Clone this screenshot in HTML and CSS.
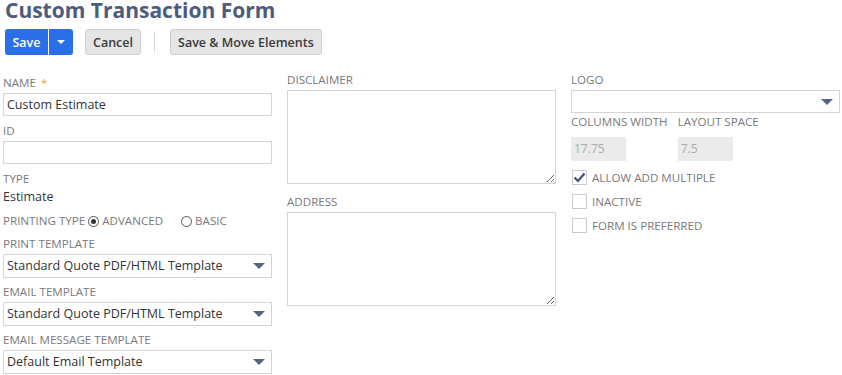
FILE: index.html
```html
<!DOCTYPE html>
<html lang="en">
<head>
<meta charset="UTF-8">
<title>Custom Transaction Form</title>
<link rel="stylesheet" href="styles.css">
</head>
<body>

<!-- Kopfbereich -->
<div class="header">
    <h1>Custom Transaction Form</h1>
    <div class="toolbar">
        <div class="saveGroup">
            <button class="saveButton">Save</button>
            <button class="saveArrow"><span class="caret light"></span></button>
        </div>
        <button class="grayButton">Cancel</button>
        <span class="separator"></span>
        <button class="grayButton">Save &amp; Move Elements</button>
    </div>
</div>

<!-- Formular -->
<div class="form">
    <div class="column first">
        <div class="field">
            <label>Name <span class="required">*</span></label>
            <input type="text" value="Custom Estimate">
        </div>
        <div class="field">
            <label>ID</label>
            <input type="text">
        </div>
        <div class="field plain">
            <label>Type</label>
            <div class="value">Estimate</div>
        </div>
        <div class="radioRow">
            <span class="label">Printing Type</span>
            <span class="radio checked"></span><span class="label">Advanced</span>
            <span class="radio spaced"></span><span class="label">Basic</span>
        </div>
        <div class="field">
            <label>Print Template</label>
            <div class="select">Standard Quote PDF/HTML Template<span class="caret"></span></div>
        </div>
        <div class="field">
            <label>Email Template</label>
            <div class="select">Standard Quote PDF/HTML Template<span class="caret"></span></div>
        </div>
        <div class="field">
            <label>Email Message Template</label>
            <div class="select">Default Email Template<span class="caret"></span></div>
        </div>
    </div>

    <div class="column">
        <div class="field area">
            <label>Disclaimer</label>
            <textarea></textarea>
        </div>
        <div class="field area">
            <label>Address</label>
            <textarea></textarea>
        </div>
    </div>

    <div class="column">
        <div class="field">
            <label>Logo</label>
            <div class="select logo"><span class="caret"></span></div>
        </div>
        <div class="smallFields">
            <div class="small">
                <label>Columns Width</label>
                <div class="disabled">17.75</div>
            </div>
            <div class="small">
                <label>Layout Space</label>
                <div class="disabled">7.5</div>
            </div>
        </div>
        <div class="check">
            <span class="box">
                <svg width="13" height="11" viewBox="0 0 13 11"><path d="M1.5 5.5 L5 9 L11.5 1.5" fill="none" stroke="#3d4f73" stroke-width="2.2"/></svg>
            </span>
            <span class="label">Allow Add Multiple</span>
        </div>
        <div class="check">
            <span class="box"></span>
            <span class="label">Inactive</span>
        </div>
        <div class="check">
            <span class="box"></span>
            <span class="label">Form is Preferred</span>
        </div>
    </div>
</div>

</body>
</html>
```

FILE: styles.css
```css
/* Allgemeine Stile */
body {
    margin: 0;
    padding: 0;
    font-family: "Open Sans", Arial, sans-serif;
    color: #333;
    background: white;
}

.header {
    padding-left: 5px;
}

h1 {
    margin: -2px 0 0 0;
    font-size: 21px;
    line-height: 24px;
    font-weight: bold;
    color: #4d5b7c;
}

/* Buttons */
.toolbar {
    display: flex;
    align-items: center;
    margin-top: 7px;
    height: 26px;
}

button {
    font-family: "Open Sans", Arial, sans-serif;
    font-size: 12.5px;
    font-weight: 600;
    height: 26px;
    border-radius: 3px;
    cursor: pointer;
    padding: 0;
}

.saveGroup {
    display: flex;
    margin-right: 12px;
}

.saveButton {
    width: 43px;
    background-color: #2a6ee8;
    color: white;
    border: none;
    border-radius: 3px 0 0 3px;
}

.saveArrow {
    width: 24px;
    margin-left: 1px;
    background-color: #2a6ee8;
    border: none;
    border-radius: 0 3px 3px 0;
    display: flex;
    align-items: center;
    justify-content: center;
}

.grayButton {
    background-color: #e5e5e5;
    border: 1px solid #cfcfcf;
    color: #3a3a3a;
    padding: 0 7px;
}

.separator {
    width: 1px;
    height: 20px;
    background-color: #d8d8d8;
    margin: 0 15px 0 13px;
}

/* Formular */
.form {
    display: grid;
    grid-template-columns: 269px 269px 269px;
    column-gap: 15px;
    padding-left: 3px;
    margin-top: 17px;
}

.column.first {
    padding-top: 3px;
}

label, .label {
    display: block;
    font-size: 11.6px;
    line-height: 16px;
    color: #7a7a7a;
    text-transform: uppercase;
}

label {
    margin-bottom: 2px;
}

.required {
    color: #e8a33d;
    margin-left: 2px;
}

.field {
    margin-bottom: 7px;
}

input[type="text"] {
    display: block;
    width: 100%;
    height: 23px;
    box-sizing: border-box;
    border: 1px solid #d4d4d4;
    padding: 0 3px;
    font-family: "Open Sans", Arial, sans-serif;
    font-size: 12.5px;
    color: #333;
    margin: 0;
}

.field.plain {
    margin-bottom: 8px;
}

.value {
    font-size: 12.5px;
    line-height: 16px;
    color: #333;
}

.radioRow {
    display: flex;
    align-items: center;
    height: 16px;
    margin-bottom: 7px;
}

.radioRow .label {
    display: inline;
}

.radio {
    width: 11px;
    height: 11px;
    box-sizing: border-box;
    border: 1px solid #555;
    border-radius: 50%;
    margin: 0 3px 0 3px;
    position: relative;
}

.radio.spaced {
    margin-left: 18px;
}

.radio.checked::after {
    content: "";
    position: absolute;
    left: 2px;
    top: 2px;
    width: 5px;
    height: 5px;
    border-radius: 50%;
    background-color: #333;
}

.select {
    height: 24px;
    box-sizing: border-box;
    border: 1px solid #d4d4d4;
    padding: 0 3px;
    font-size: 12.5px;
    line-height: 22px;
    color: #333;
    display: flex;
    align-items: center;
    justify-content: space-between;
}

.field:has(.select) {
    margin-bottom: 6px;
}

.caret {
    width: 0;
    height: 0;
    border-left: 6px solid transparent;
    border-right: 6px solid transparent;
    border-top: 6px solid #56647f;
    margin-right: 3px;
}

.caret.light {
    border-left-width: 4px;
    border-right-width: 4px;
    border-top: 4px solid white;
    margin: 0;
}

.select.logo {
    height: 23px;
    justify-content: flex-end;
}

textarea {
    display: block;
    width: 100%;
    height: 94px;
    box-sizing: border-box;
    border: 1px solid #d4d4d4;
    margin: 0;
    resize: both;
}

.field.area {
    margin-bottom: 10px;
}

.smallFields {
    display: flex;
    gap: 10px;
    margin-top: -5px;
}

.small label {
    margin-bottom: 7px;
}

.disabled {
    width: 55px;
    height: 24px;
    box-sizing: border-box;
    background-color: #ebebeb;
    font-size: 12px;
    line-height: 24px;
    color: #aaa;
    padding-left: 3px;
}

.check {
    display: flex;
    align-items: center;
    height: 15px;
    margin-top: 9px;
}

.check:first-of-type {
    margin-top: 6px;
}

.box {
    width: 15px;
    height: 15px;
    box-sizing: border-box;
    border: 1px solid #ccc;
    margin-left: 1px;
    margin-right: 5px;
    display: flex;
    align-items: center;
    justify-content: center;
}
```
